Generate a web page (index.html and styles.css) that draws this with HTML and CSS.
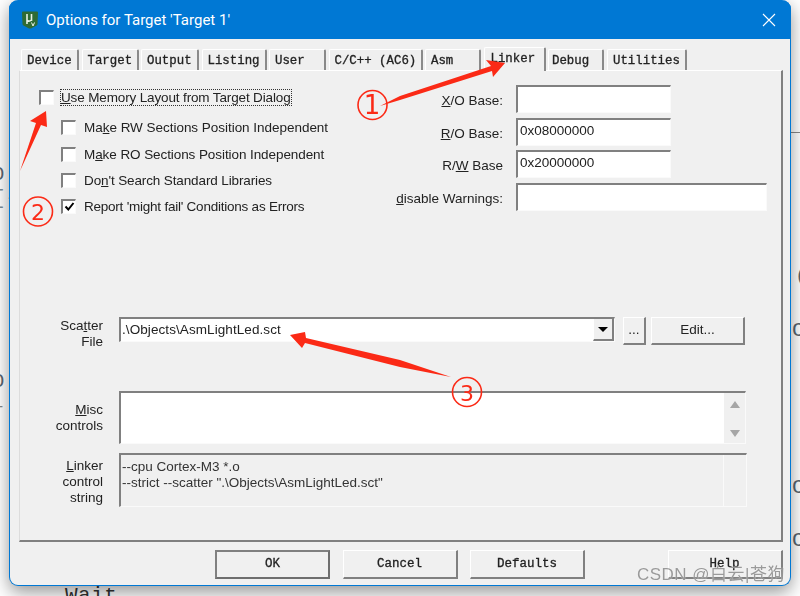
FILE: index.html
```html
<!DOCTYPE html>
<html lang="en">
<head>
<meta charset="utf-8">
<title>Options for Target 'Target 1'</title>
<link rel="stylesheet" href="styles.css">
</head>
<body>
<div class="bg-text bg-a">0:</div>
<div class="bg-text bg-b">[-</div>
<div class="bg-text bg-c">0.</div>
<div class="bg-text bg-d">+</div>
<div class="bg-text bg-e">(</div>
<div class="bg-text bg-f">C</div>
<div class="bg-text bg-g">C</div>
<div class="bg-text bg-h">C</div>
<div class="bg-text bg-wait">Wait</div>
<div class="bg-line"></div>

<main class="window">
  <header class="titlebar">
    <svg class="app-icon" width="18" height="18" viewBox="0 0 18 18">
      <path d="M1 1.5Q1 .5 2 .5H16Q17 .5 17 1.5L16.5 13Q16.400 14 15.500 14.500L10 17.500H8L2.500 14.500Q1.600 14 1.500 13Z" fill="#2f6b34"/>
      <path d="M6 3V10M6 9.500Q8 11 10.500 9M10.500 3V10M6 10V13" fill="none" stroke="#e8f2e8" stroke-width="1.600"/>
      <path d="M10.500 11.500L12 15L13.500 11.500" fill="none" stroke="#e8f2e8" stroke-width="1"/>
    </svg>
    <span class="title">Options for Target 'Target 1'</span>
    <svg class="close" width="14" height="14" viewBox="0 0 14 14"><path d="M1 1L13 13M13 1L1 13" stroke="#fff" stroke-width="1.100"/></svg>
  </header>

  <nav class="tabs">
    <div class="tab w-device">Device</div>
    <div class="tab w-target">Target</div>
    <div class="tab w-output">Output</div>
    <div class="tab w-listing">Listing</div>
    <div class="tab w-user">User</div>
    <div class="tab w-cc">C/C++ (AC6)</div>
    <div class="tab w-asm">Asm</div>
    <div class="tab tab-active w-linker">Linker</div>
    <div class="tab w-debug">Debug</div>
    <div class="tab w-util">Utilities</div>
  </nav>

  <section class="panel">
    <div class="upper">
      <div class="checks">
        <label class="check check-main"><span class="box"></span><span class="focus fit-use"><u>U</u>se Memory Layout from Target Dialog</span></label>
        <label class="check check-sub check-first"><span class="box"></span><span class="fit-rw">Ma<u>k</u>e RW Sections Position Independent</span></label>
        <label class="check check-sub"><span class="box"></span><span class="fit-ro">M<u>a</u>ke RO Sections Position Independent</span></label>
        <label class="check check-sub"><span class="box"></span><span class="fit-dont">Do<u>n</u>'t Search Standard Libraries</span></label>
        <label class="check check-sub"><span class="box box-on"><svg width="11" height="11" viewBox="0 0 11 11"><path d="M1.500 5.500L4.300 8.500L9.500 2" fill="none" stroke="#000" stroke-width="2"/></svg></span><span class="fit-report">Report 'mi<u>g</u>ht fail' Conditions as Errors</span></label>
      </div>
      <div class="fields">
        <span class="field-label"><u>X</u>/O Base:</span><div class="edit edit-short"></div>
        <span class="field-label"><u>R</u>/O Base:</span><div class="edit edit-short">0x08000000</div>
        <span class="field-label">R/<u>W</u> Base</span><div class="edit edit-short">0x20000000</div>
        <span class="field-label"><u>d</u>isable Warnings:</span><div class="edit"></div>
      </div>
    </div>

    <div class="row row-scatter">
      <div class="row-label">Sca<u>t</u>ter<br>File</div>
      <div class="scatter-controls">
        <div class="combo">
          <span class="combo-text">.\Objects\AsmLightLed.sct</span>
          <span class="combo-btn"><span class="caret"></span></span>
        </div>
        <button class="btn btn-dots">...</button>
        <button class="btn btn-edit">Edit...</button>
      </div>
    </div>

    <div class="row row-misc">
      <div class="row-label"><u>M</u>isc<br>controls</div>
      <div class="multi multi-misc">
        <div class="multi-body"></div>
        <div class="scroll">
          <span class="arrow arrow-up"></span>
          <span class="arrow arrow-down"></span>
        </div>
      </div>
    </div>

    <div class="row row-linker">
      <div class="row-label"><u>L</u>inker<br>control<br>string</div>
      <div class="multi multi-linker">
        <div class="multi-body">--cpu Cortex-M3 *.o<br>--strict --scatter ".\Objects\AsmLightLed.sct"</div>
        <div class="scroll scroll-plain"></div>
      </div>
    </div>
  </section>

  <footer class="buttons">
    <button class="dlg-btn dlg-default">OK</button>
    <button class="dlg-btn">Cancel</button>
    <button class="dlg-btn">Defaults</button>
    <button class="dlg-btn dlg-help">Help</button>
  </footer>
</main>

<svg class="notes" width="800" height="596" viewBox="0 0 800 596">
  <polygon points="380,106 400,96 491,66 486,60 505,63 493,77 492,71 400,100" fill="#fb2a16"/>
  <polygon points="20,171 36,123 30,121 46,111 47,127 41,125" fill="#fb2a16"/>
  <polygon points="451,377 400,367 305,343 302,348 290,335 305,332 306,338 400,360" fill="#fb2a16"/>
  <circle cx="372.500" cy="105" r="14.500" class="ring"/>
  <text x="372" y="114" class="digit digit-one">1</text>
  <circle cx="38" cy="211.500" r="14.500" class="ring"/>
  <text x="38" y="219.500" class="digit">2</text>
  <circle cx="467" cy="392" r="14.500" class="ring"/>
  <text x="467" y="400.500" class="digit">3</text>
</svg>
<div class="watermark">CSDN @白云|苍狗</div>
</body>
</html>
```

FILE: styles.css
```css
html, body {
  margin: 0;
  padding: 0;
}
body {
  position: relative;
  width: 800px;
  height: 596px;
  overflow: hidden;
  background: #fff;
  font-family: "Liberation Sans", Arial, sans-serif;
  font-size: 13.5px;
  color: #222;
}
u { text-underline-offset: 1px; }

/* text of the window behind the dialog */
.bg-text {
  position: absolute;
  font-family: "Liberation Mono", monospace;
  font-size: 21px;
  line-height: 24px;
  color: #5b6570;
}
.bg-a { left: -8px; top: 163px; }
.bg-b { left: -7px; top: 187px; color: #7d8d99; }
.bg-c { left: -8px; top: 370px; }
.bg-d { left: -9px; top: 397px; color: #888; }
.bg-e { left: 795px; top: 265px; }
.bg-f { left: 792px; top: 319px; }
.bg-g { left: 792px; top: 476px; }
.bg-h { left: 792px; top: 529px; }
.bg-wait {
  left: 65px;
  top: 584px;
  letter-spacing: .5px;
  color: #333;
}
.bg-line {
  position: absolute;
  left: 791px;
  top: 132px;
  width: 9px;
  height: 1px;
  background: #888;
}

/* dialog */
.window {
  position: absolute;
  left: 9px;
  top: 0;
  width: 782px;
  height: 586px;
  box-sizing: border-box;
  display: flex;
  flex-direction: column;
  background: #f0f0f0;
  border: 1px solid #0078d4;
  border-top: 0;
  border-radius: 9px;
  box-shadow: 0 6px 18px rgba(0, 0, 0, .42);
  filter: blur(.4px);
}
.titlebar {
  height: 39px;
  flex: none;
  display: flex;
  align-items: center;
  margin: 0 -1px;
  padding: 0 14px 0 12px;
  background: #0078d4;
  border-radius: 9px 9px 0 0;
}
.app-icon { flex: none; margin-right: 7px; }
.title {
  flex: 1;
  font-family: Roboto, sans-serif;
  font-size: 15px;
  color: #fff;
}
.close { flex: none; margin-right: 1px; }

/* tabs */
.tabs {
  flex: none;
  display: flex;
  align-items: flex-end;
  height: 23px;
  margin: 8px 0 0 11px;
  column-gap: 2.500px;
  position: relative;
  z-index: 1;
}
.tab {
  box-sizing: border-box;
  height: 21px;
  padding: 4px 0 0 5px;
  font-family: "Liberation Mono", monospace;
  font-size: 12.400px;
  -webkit-text-stroke: .3px #222;
  line-height: 14px;
  color: #222;
  background: #efefef;
  border-top: 1px solid #fff;
  border-left: 1px solid #fff;
  border-right: 2px solid #8a8a8a;
  border-radius: 2px 2px 0 0;
  white-space: pre;
}
.tab-active {
  height: 24px;
  padding: 4px 0 0 6px;
  margin-bottom: -1px;
  background: #f0f0f0;
}
.w-device { width: 58px; }
.w-target { width: 57px; }
.w-output { width: 58px; }
.w-listing { width: 65px; }
.w-user { width: 57px; }
.w-cc { width: 94px; }
.w-asm { width: 56px; }
.w-linker { width: 62px; }
.w-debug { width: 56px; padding-left: 3px; }
.w-util { width: 80px; padding-left: 5.500px; }

/* panel */
.panel {
  flex: none;
  box-sizing: border-box;
  width: 764px;
  height: 472px;
  margin-left: 9px;
  padding-top: 14px;
  border-top: 1px solid #fff;
  border-left: 1px solid #dcdcdc;
  border-right: 2px solid #808080;
  border-bottom: 2px solid #808080;
}
.upper {
  display: flex;
  justify-content: space-between;
  height: 131px;
  padding-right: 14px;
}
.checks {
  padding: 2px 0 0 19px;
  display: flex;
  flex-direction: column;
}
.check {
  display: flex;
  align-items: center;
  height: 20px;
  white-space: nowrap;
}
.check-main { column-gap: 7px; }
.check-sub { column-gap: 8px; margin: 6px 0 0 22px; }
.check-first { margin-top: 10px; margin-bottom: 1px; }
.fit-use { letter-spacing: -.14px; }
.fit-rw { letter-spacing: -.03px; }
.fit-ro { letter-spacing: -.08px; }
.fit-dont { letter-spacing: -.12px; }
.fit-report { letter-spacing: -.23px; }
.box {
  flex: none;
  box-sizing: border-box;
  display: flex;
  align-items: center;
  justify-content: center;
  width: 15px;
  height: 15px;
  background: #fff;
  border-top: 2px solid #808080;
  border-left: 2px solid #808080;
  border-right: 1px solid #fafafa;
  border-bottom: 1px solid #fafafa;
}
.focus {
  outline: 1px dotted #333;
  outline-offset: 0;
  margin-left: 0;
}
.fields {
  display: grid;
  grid-template-columns: auto 251px;
  grid-auto-rows: 28px;
  row-gap: 4.670px;
  column-gap: 12px;
  align-items: center;
  justify-items: start;
}
.field-label {
  justify-self: end;
  padding: 3px 1px 0 0;
  white-space: nowrap;
}
.edit {
  box-sizing: border-box;
  width: 251px;
  height: 28px;
  padding: 2px 0 0 2px;
  line-height: 17px;
  background: #fff;
  border-top: 2px solid #808080;
  border-left: 2px solid #808080;
  border-right: 1px solid #fafafa;
  border-bottom: 1px solid #fafafa;
}
.edit-short { width: 155px; }

/* lower rows */
.row {
  display: grid;
  grid-template-columns: 83px 1fr;
  column-gap: 16px;
  align-items: start;
}
.row-label {
  text-align: right;
  line-height: 16px;
}
.row-scatter { margin-top: 101px; height: 28px; }
.row-scatter .row-label { padding-top: 1px; }
.row-misc { margin-top: 46px; }
.row-misc .row-label { padding-top: 11px; }
.row-linker { margin-top: 9px; }
.row-linker .row-label { padding-top: 5px; }

.scatter-controls {
  display: flex;
  align-items: flex-start;
}
.combo {
  box-sizing: border-box;
  flex: none;
  width: 496px;
  height: 25px;
  display: flex;
  background: #fff;
  border-top: 2px solid #808080;
  border-left: 2px solid #808080;
  border-right: 1px solid #fafafa;
  border-bottom: 1px solid #fafafa;
}
.combo-text {
  flex: 1;
  padding: 2px 0 0 1px;
  line-height: 17px;
  letter-spacing: .08px;
}
.combo-btn {
  box-sizing: border-box;
  flex: none;
  width: 21px;
  display: flex;
  align-items: center;
  justify-content: center;
  background: #f0f0f0;
  border-right: 2px solid #808080;
  border-bottom: 2px solid #808080;
  border-left: 1px solid #fff;
}
.caret {
  width: 0;
  height: 0;
  border-left: 5px solid transparent;
  border-right: 5px solid transparent;
  border-top: 5px solid #000;
}
.btn {
  box-sizing: border-box;
  flex: none;
  height: 28px;
  padding: 0 0 2px;
  font-family: "Liberation Sans", Arial, sans-serif;
  font-size: 13.500px;
  color: #222;
  background: #f0f0f0;
  border-top: 1px solid #fff;
  border-left: 1px solid #fff;
  border-right: 2px solid #808080;
  border-bottom: 2px solid #808080;
}
.btn-dots { width: 23px; margin-left: 8px; }
.btn-edit { width: 94px; margin-left: 5px; }

.multi {
  box-sizing: border-box;
  display: flex;
  border-top: 2px solid #808080;
  border-left: 2px solid #808080;
  border-right: 1px solid #fafafa;
  border-bottom: 1px solid #fafafa;
}
.multi-misc { width: 627px; height: 53px; background: #fff; }
.multi-linker {
  width: 628px;
  height: 54px;
  font-size: 13.500px;
  line-height: 16px;
  color: #333;
}
.multi-body {
  flex: 1;
  padding: 4px 0 0 1px;
  white-space: pre;
}
.scroll {
  flex: none;
  box-sizing: border-box;
  width: 21px;
  display: flex;
  flex-direction: column;
  justify-content: space-between;
  align-items: center;
  padding: 8px 0 6px;
  background: #f0f0f0;
}
.scroll-plain {
  width: 23px;
  border-left: 1px solid #fafafa;
}
.arrow {
  width: 0;
  height: 0;
  border-left: 5.500px solid transparent;
  border-right: 5.500px solid transparent;
}
.arrow-up { border-bottom: 7px solid #a6a6a6; }
.arrow-down { border-top: 7px solid #a6a6a6; }

/* dialog buttons */
.buttons {
  flex: none;
  display: flex;
  column-gap: 12.500px;
  margin-top: 8px;
  padding-left: 205px;
}
.dlg-btn {
  box-sizing: border-box;
  width: 115px;
  height: 29px;
  padding: 0 0 1px;
  font-family: "Liberation Mono", monospace;
  font-size: 12.500px;
  -webkit-text-stroke: .3px #222;
  color: #222;
  background: #f0f0f0;
  border-top: 1px solid #fff;
  border-left: 1px solid #fff;
  border-right: 2px solid #808080;
  border-bottom: 2px solid #808080;
}
.dlg-default {
  border: 2px solid #808080;
  border-right-color: #6e6e6e;
  border-bottom-color: #6e6e6e;
}
.dlg-help { margin-left: 70px; }

/* annotations added on top of the screenshot */
.notes {
  position: absolute;
  left: 0;
  top: 0;
}
.ring {
  fill: none;
  stroke: #fb2a16;
  stroke-width: 1.600;
}
.digit {
  font-family: "DejaVu Sans", sans-serif;
  font-size: 22px;
  font-weight: 400;
  text-anchor: middle;
  fill: #fb2a16;
}
.digit-one { font-size: 26px; }
.watermark {
  position: absolute;
  right: 15px;
  top: 564px;
  font-family: "Liberation Sans", "Noto Sans CJK SC", sans-serif;
  font-size: 17px;
  line-height: 22px;
  letter-spacing: .5px;
  color: rgba(100, 100, 100, .65);
  text-shadow: 0 0 1px #fff;
  white-space: nowrap;
}
```
